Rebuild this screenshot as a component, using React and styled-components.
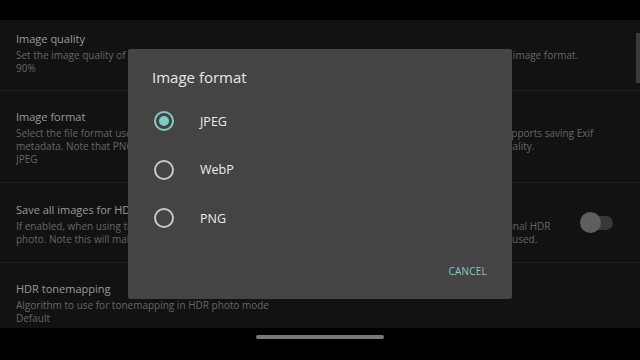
import styled, { createGlobalStyle } from "styled-components";

const Global = createGlobalStyle`
  html, body { margin: 0; padding: 0; background: #000; }
  body { font-family: "Open Sans", "Noto Sans", sans-serif; }
`;

const settings = [
  {
    title: "Image quality",
    lines: [
      "Set the image quality of saved images, where higher values mean better quality and larger file sizes for the image format.",
      "90%",
    ],
    height: 77,
  },
  {
    title: "Image format",
    lines: [
      "Select the file format used for saving photos and other images. Note that only the standard JPEG format supports saving Exif",
      "metadata. Note that PNG does not support lossy compression, so the quality setting has no effect on its quality.",
      "JPEG",
    ],
    height: 92,
  },
  {
    title: "Save all images for HDR mode",
    lines: [
      "If enabled, when using the HDR photo mode, also save the three base exposure images in addition to the final HDR",
      "photo. Note this will make saving much slower, especially if options like photo stamp or auto-level are also used.",
    ],
    height: 80,
    toggle: true,
  },
  {
    title: "HDR tonemapping",
    lines: ["Algorithm to use for tonemapping in HDR photo mode", "Default"],
    height: 78,
  },
];

const options = ["JPEG", "WebP", "PNG"];

export default function App() {
  return (
    <>
      <Global />
      <Screen>
        <StatusBar />
        <Content>
          <List>
            {settings.map((s, i) => (
              <Row key={s.title} $h={s.height} $last={i === settings.length - 1}>
                <Texts>
                  <Title>{s.title}</Title>
                  {s.lines.map((l) => (
                    <Sub key={l}>{l}</Sub>
                  ))}
                </Texts>
                {s.toggle && (
                  <Switch>
                    <Track />
                    <Thumb />
                  </Switch>
                )}
              </Row>
            ))}
          </List>
          <ScrollThumb />
          <Dialog>
            <DialogTitle>Image format</DialogTitle>
            <Options>
              {options.map((o, i) => (
                <Option key={o}>
                  <Radio $on={i === 0} />
                  <OptionLabel>{o}</OptionLabel>
                </Option>
              ))}
            </Options>
            <Actions>
              <CancelButton>CANCEL</CancelButton>
            </Actions>
          </Dialog>
        </Content>
        <NavBar>
          <Handle />
        </NavBar>
      </Screen>
    </>
  );
}

const Screen = styled.div`
  width: 640px;
  height: 360px;
  display: flex;
  flex-direction: column;
  background: #000;
  overflow: hidden;
`;

const StatusBar = styled.div`
  height: 20px;
  flex-shrink: 0;
  background: #000;
`;

const Content = styled.div`
  position: relative;
  height: 308px;
  flex-shrink: 0;
  background: #121212;
  overflow: hidden;
`;

const List = styled.div`
  margin-top: -6px;
`;

const Row = styled.div`
  height: ${(p) => p.$h}px;
  box-sizing: border-box;
  padding: 0 16px;
  display: flex;
  align-items: center;
  border-bottom: ${(p) => (p.$last ? "none" : "1px solid #1d1d1d")};
`;

const Texts = styled.div`
  flex: 1;
  min-width: 0;
  white-space: nowrap;
  overflow: hidden;
`;

const Title = styled.div`
  font-size: 11px;
  line-height: 20px;
  color: #9a9a9a;
`;

const Sub = styled.div`
  font-size: 10px;
  line-height: 13px;
  color: #666;
`;

const Switch = styled.div`
  position: relative;
  width: 33px;
  height: 21px;
  margin-right: 11px;
  margin-left: 8px;
  flex-shrink: 0;
`;

const Track = styled.div`
  position: absolute;
  left: 8px;
  top: 4px;
  width: 25px;
  height: 14px;
  border-radius: 7px;
  background: #383838;
`;

const Thumb = styled.div`
  position: absolute;
  left: 0;
  top: 0;
  width: 21px;
  height: 21px;
  border-radius: 50%;
  background: #5e5e5e;
`;

const ScrollThumb = styled.div`
  position: absolute;
  right: 0;
  top: 13px;
  width: 4px;
  height: 50px;
  background: #3a3a3a;
`;

const Dialog = styled.div`
  position: absolute;
  left: 128px;
  top: 29px;
  width: 384px;
  height: 250px;
  box-sizing: border-box;
  background: #444444;
  border-radius: 2px;
  padding: 20px 24px 0;
  display: flex;
  flex-direction: column;
`;

const DialogTitle = styled.div`
  font-size: 15px;
  line-height: 16px;
  color: #e8e8e8;
`;

const Options = styled.div`
  margin-top: 12px;
  display: flex;
  flex-direction: column;
`;

const Option = styled.div`
  height: 48.5px;
  display: flex;
  align-items: center;
`;

const Radio = styled.div`
  width: 20px;
  height: 20px;
  box-sizing: border-box;
  margin-left: 2px;
  border-radius: 50%;
  border: 2px solid ${(p) => (p.$on ? "#80cbc4" : "#c8c8c8")};
  display: flex;
  align-items: center;
  justify-content: center;
  &::after {
    content: "";
    width: 10px;
    height: 10px;
    border-radius: 50%;
    background: ${(p) => (p.$on ? "#80cbc4" : "transparent")};
  }
`;

const OptionLabel = styled.div`
  margin-left: 26px;
  font-size: 12.5px;
  color: #ececec;
`;

const Actions = styled.div`
  margin-top: auto;
  height: 56px;
  display: flex;
  justify-content: flex-end;
  align-items: center;
`;

const CancelButton = styled.div`
  font-size: 10px;
  color: #80cbc4;
  margin-right: 1px;
  letter-spacing: 0.2px;
`;

const NavBar = styled.div`
  flex: 1;
  background: #000;
  display: flex;
  justify-content: center;
  padding-top: 7px;
`;

const Handle = styled.div`
  width: 128px;
  height: 4px;
  border-radius: 2px;
  background: #7a7a7a;
`;
